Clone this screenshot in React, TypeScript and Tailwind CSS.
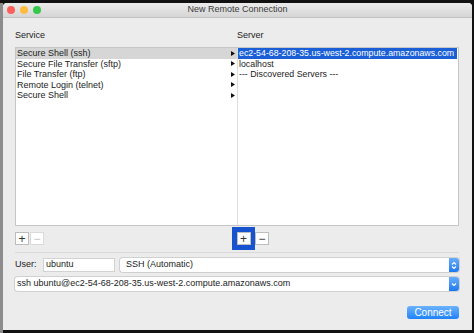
import React from "react";

const services = [
  "Secure Shell (ssh)",
  "Secure File Transfer (sftp)",
  "File Transfer (ftp)",
  "Remote Login (telnet)",
  "Secure Shell",
];

const servers = [
  "ec2-54-68-208-35.us-west-2.compute.amazonaws.com",
  "localhost",
  "--- Discovered Servers ---",
];

function Arrow() {
  return (
    <svg width="4" height="5" viewBox="0 0 4 5" className="shrink-0">
      <path d="M0 0 L4 2.5 L0 5 Z" fill="#111" />
    </svg>
  );
}

function SmallButton({ label, disabled }: { label: string; disabled?: boolean }) {
  return (
    <div
      className={`flex h-[13px] w-[14px] items-center justify-center border bg-white text-[12px] leading-none ${
        disabled ? "border-[#dadada] text-[#c4c4c4]" : "border-[#bdbdbd] text-[#333]"
      }`}
    >
      {label}
    </div>
  );
}

function Stepper({ down }: { down?: boolean }) {
  return (
    <div className="flex h-full w-[10px] items-center justify-center rounded-r-[3px] bg-gradient-to-b from-[#67aefa] to-[#1c78f0]">
      <svg width="6" height="9" viewBox="0 0 6 9">
        {down ? (
          <path d="M1 3.5 L3 5.5 L5 3.5" stroke="white" strokeWidth="1.1" fill="none" />
        ) : (
          <>
            <path d="M1 3.5 L3 1.5 L5 3.5" stroke="white" strokeWidth="1.1" fill="none" />
            <path d="M1 5.5 L3 7.5 L5 5.5" stroke="white" strokeWidth="1.1" fill="none" />
          </>
        )}
      </svg>
    </div>
  );
}

export default function App() {
  return (
    <div
      className="flex h-[333px] w-[474px] bg-[#111] pt-[3px]"
      style={{ fontFamily: '"Liberation Sans", Arial, sans-serif' }}
    >
      <div className="h-full w-[3px] bg-[#8c8c8c]" />
      <div className="flex h-[327px] w-[469px] flex-col overflow-hidden rounded-t-[4px] bg-[#ececec]">
        {/* title bar */}
        <div className="relative flex h-[15px] shrink-0 items-center justify-center border-b border-[#c2c2c2] bg-gradient-to-b from-[#ebebeb] to-[#d6d6d6]">
          <div className="absolute left-[4px] top-[3px] flex gap-[5px]">
            <div className="h-[8px] w-[8px] rounded-full bg-[#fc605c]" />
            <div className="h-[8px] w-[8px] rounded-full bg-[#fdbc40]" />
            <div className="h-[8px] w-[8px] rounded-full bg-[#34c84a]" />
          </div>
          <span className="text-[9px] text-[#3a3a3a]">New Remote Connection</span>
        </div>

        <div className="flex flex-col pl-[12px] pr-[13px] text-[9px] text-[#222]">
          {/* column labels */}
          <div className="mt-[12px] flex h-[11px] items-center leading-[11px]">
            <span className="w-[222px]">Service</span>
            <span>Server</span>
          </div>

          {/* list */}
          <div className="mt-[6px] flex h-[179px] border border-[#c6c6c6] bg-white">
            <div className="flex w-[221px] flex-col">
              {services.map((s, i) => (
                <div
                  key={s + i}
                  className={`flex h-[10.5px] items-center justify-between pl-[1px] pr-[2px] leading-[10.5px] ${
                    i === 0 ? "bg-[#d6d6d6]" : ""
                  }`}
                >
                  <span>{s}</span>
                  <Arrow />
                </div>
              ))}
            </div>
            <div className="w-px bg-[#dedede]" />
            <div className="flex min-w-0 flex-1 flex-col pr-[1px]">
              {servers.map((s, i) => (
                <div
                  key={s}
                  className={`flex h-[10.5px] items-center overflow-hidden whitespace-nowrap pl-[1px] text-[8.8px] leading-[10.5px] ${
                    i === 0 ? "bg-[#1b5fd6] text-white" : ""
                  }`}
                >
                  {s}
                </div>
              ))}
            </div>
          </div>

          {/* add/remove buttons */}
          <div className="mt-[1px] flex h-[23px] items-center">
            <div className="flex w-[217px] items-center gap-[1px]">
              <SmallButton label="+" />
              <SmallButton label="−" disabled />
            </div>
            <div className="flex h-[23px] w-[23px] items-center justify-center bg-[#1553cf]">
              <SmallButton label="+" />
            </div>
            <SmallButton label="−" />
          </div>

          <div className="mt-[2px] h-px bg-[#d9d9d9]" />

          {/* user row */}
          <div className="mt-[5px] flex h-[14px] items-center">
            <span className="w-[28px] text-[#222]">User:</span>
            <div className="flex h-[14px] w-[72px] items-center border border-[#d2d2d2] bg-white pl-[2px]">
              ubuntu
            </div>
            <div className="ml-[5px] flex h-[14px] flex-1 items-center justify-between rounded-[3px] bg-white shadow-[0_0_0_1px_#d0d0d0]">
              <span className="pl-[6px]">SSH (Automatic)</span>
              <Stepper />
            </div>
          </div>

          {/* command */}
          <div className="mt-[5px] flex h-[14px] items-center justify-between rounded-[3px] bg-white shadow-[0_0_0_1px_#d0d0d0]">
            <span className="whitespace-nowrap pl-[2px]">ssh ubuntu@ec2-54-68-208-35.us-west-2.compute.amazonaws.com</span>
            <Stepper down />
          </div>

          {/* connect */}
          <div className="mt-[15px] flex justify-end">
            <div className="flex h-[13px] w-[52px] items-center justify-center rounded-[3px] bg-gradient-to-b from-[#6ab2fb] to-[#1b82fb] text-[10px] text-white">
              Connect
            </div>
          </div>
        </div>
      </div>
      <div className="h-full w-[2px] bg-[#111]" />
    </div>
  );
}
